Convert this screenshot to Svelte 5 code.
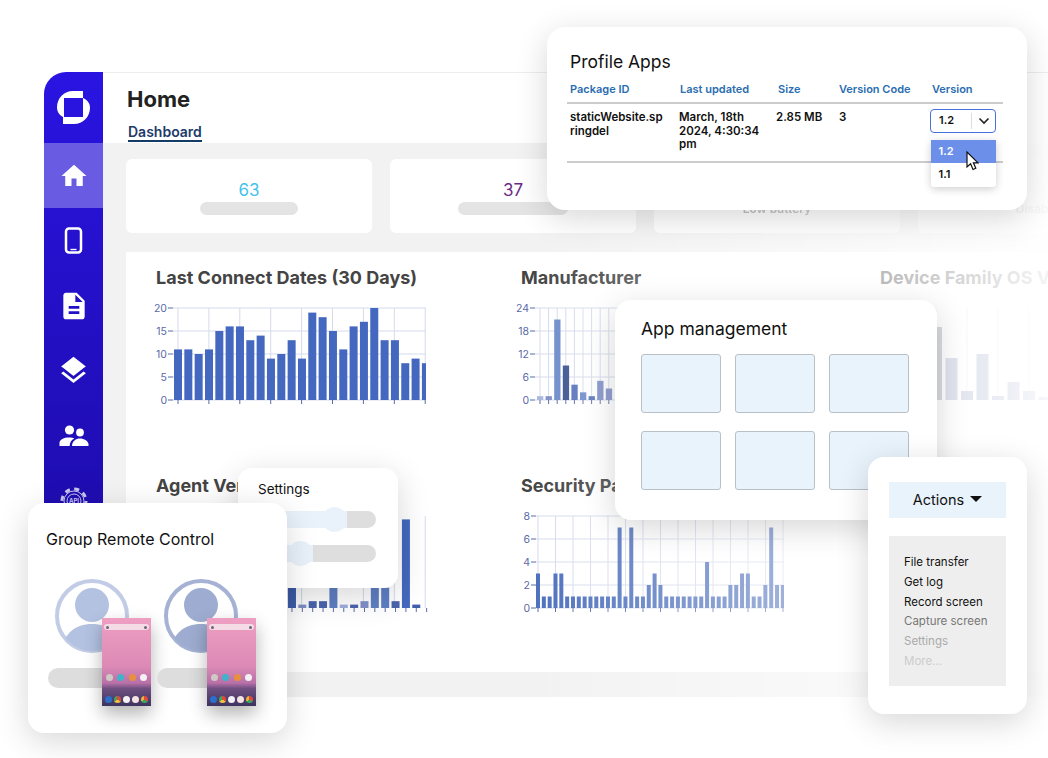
<script>
	const range = (n, a, b) => Array.from({ length: n }, (_, i) => a + b * i);

	const connect = {
		title: 'Last Connect Dates (30 Days)',
		plotX: 17, plotW: 253, max: 20, ticks: [0, 5, 10, 15, 20],
		barX: 1, barW: 8, step: 10.33,
		grid: range(9, 5, 30.9), xTicks: range(9, 5, 30.9),
		values: [11, 11, 10, 11, 15, 16, 16, 13, 14, 9, 10, 13, 9, 19, 18, 15, 11, 16, 17, 20, 13, 13, 8, 9, 8],
		color: '#4468bf'
	};
	const maker = {
		title: 'Manufacturer',
		plotX: 14, plotW: 240, max: 24, ticks: [0, 6, 12, 18, 24],
		barX: 2, barW: 6.3, step: 8.6,
		grid: range(12, 5, 8.6), xTicks: range(12, 5, 8.6),
		values: [1, 1, 21, 9, 4, 2, 1, 5, 3],
		colors: ['#a9b6dc', '#7f8fc8', '#6f8dcb', '#3e5590', '#5875bb', '#6f8dcb', '#5875bb', '#7f8fc8', '#7f8fc8'],
		color: '#6f8dcb'
	};
	const family = {
		title: 'Device Family OS Versions',
		plotX: 14, plotW: 200, max: 92, ticks: [],
		barX: 36, barW: 12, step: 15.5,
		grid: range(8, 42, 31), xTicks: [],
		values: [73, 42, 9, 46, 4, 18, 9, 3],
		colors: ['#68707e'],
		color: '#7d88b8'
	};
	const agent = {
		title: 'Agent Versions',
		plotX: 17, plotW: 253, max: 27, ticks: [],
		barX: 1, barW: 8, step: 10.36,
		grid: range(9, 5, 30.9), xTicks: range(25, 5, 10.36),
		values: [3, 5, 4, 2, 6, 3, 2, 4, 5, 3, 4, 8, 1, 2, 2, 6, 1, 1, 2, 6, 6, 2, 26, 1],
		colors: [...Array(11).fill('#4468bf'), '#3f5fae', '#8090c8', '#4a64ad', '#4a64ad', '#5f7fc4', '#a0aedb', '#4a64ad', '#8090c8', '#5f7fc4', '#5f7fc4', '#4a64ad', '#4468bf', '#3f5fae'],
		color: '#4468bf'
	};
	const security = {
		title: 'Security Patch',
		plotX: 15, plotW: 248, max: 8, ticks: [0, 2, 4, 6, 8],
		barX: 0, barW: 4, step: 5.83,
		grid: range(15, 2, 17.5), xTicks: range(15, 2, 17.5),
		values: [3, 1, 1, 3, 3, 1, 1, 1, 1, 1, 1, 1, 1, 1, 7, 1, 7, 1, 1, 2, 3, 2, 1, 1, 1, 1, 1, 1, 1, 4, 1, 1, 1, 2, 2, 3, 3, 1, 1, 2, 7, 2, 2],
		color: '#4d6fbc'
	};

	const nav = ['home', 'phone', 'doc', 'layers', 'people', 'api'];
	const tiles = [
		{ value: '63', tone: 'cyan' },
		{ value: '37', tone: 'purple' },
		{ label: 'Low battery' },
		{ label: 'Disabled' }
	];
	const actions = ['File transfer', 'Get log', 'Record screen', 'Capture screen', 'Settings', 'More...'];
	const columns = ['Package ID', 'Last updated', 'Size', 'Version Code', 'Version'];
</script>

{#snippet chart(c)}
	{@const top = 8}
	{@const h = 92}
	<div class="chart">
		<h2>{c.title}</h2>
		<svg width="340" height="108" viewBox="0 0 340 108">
			{#each c.ticks as t}
				{@const y = top + h - (t / c.max) * h}
				<line x1={c.plotX} x2={c.plotX + c.plotW} y1={y} y2={y} class="grid" />
				<line x1={c.plotX - 5} x2={c.plotX} y1={y} y2={y} class="tick" />
				<text x={c.plotX - 6} y={y + 4} class="label">{t}</text>
			{/each}
			{#each c.grid as x}
				<line x1={c.plotX + x} x2={c.plotX + x} y1={top} y2={top + h} class="grid" />
			{/each}
			{#each c.xTicks as x}
				<line x1={c.plotX + x} x2={c.plotX + x} y1={top + h} y2={top + h + 4} class="tick" />
			{/each}
			{#each c.values as v, i}
				{@const bar = (v / c.max) * h}
				{@const x = c.plotX + c.barX + i * c.step}
				<rect {x} y={top + h - bar} width={Math.min(c.barW, c.plotX + c.plotW - x)} height={bar} fill={c.colors?.[i] ?? c.color} />
			{/each}
		</svg>
	</div>
{/snippet}

{#snippet icon(name)}
	{#if name === 'home'}
		<svg width="30" height="30" viewBox="0 0 24 24"><path d="M10 20v-6h4v6h5v-8h3L12 3 2 12h3v8z" /></svg>
	{:else if name === 'phone'}
		<svg width="19" height="27" viewBox="0 0 19 27"><rect x="2" y="1.5" width="15" height="24" rx="3" class="outline" /><path d="M6.5 21.8h6v1.4h-6z" /></svg>
	{:else if name === 'doc'}
		<svg width="32" height="32" viewBox="0 0 24 24"><path d="M14 2H6c-1.1 0-2 .9-2 2v16c0 1.1.9 2 2 2h12c1.1 0 2-.9 2-2V8l-6-6zm2 16H8v-2h8v2zm0-4H8v-2h8v2zm-3-5V3.5L18.5 9H13z" /></svg>
	{:else if name === 'layers'}
		<svg width="33" height="33" viewBox="0 0 24 24"><path d="M11.99 18.54l-7.37-5.73L3 14.07l9 7 9-7-1.63-1.27-7.38 5.74zM12 16l7.36-5.73L21 9l-9-7-9 7 1.63 1.27L12 16z" /></svg>
	{:else if name === 'people'}
		<svg width="30" height="22" viewBox="0 0 30 22"><circle cx="10.5" cy="5" r="4.6" /><circle cx="21" cy="7.5" r="3.9" /><path d="M0.5 21v-3c0-3.6 4.6-5.6 9.6-5.6 2 0 3.8.3 5.2 1-3 1.5-4.6 3.7-4.6 7.6z" /><path d="M13 21c0-5 4-7.6 8-7.6s8.500 2.600 8.500 6V21z" /></svg>
	{:else}
		<svg width="30" height="30" viewBox="0 0 30 30" class="gear">
			<circle cx="15" cy="15" r="12" class="teeth" />
			<circle cx="15" cy="15" r="10" class="outline thin" />
			<circle cx="15" cy="15" r="7" class="outline thin" />
			<text x="15" y="17" text-anchor="middle">API</text>
		</svg>
	{/if}
{/snippet}

{#snippet member(tone)}
	<div class="member {tone}">
		<svg class="avatar" width="78" height="78" viewBox="0 0 78 78">
			<clipPath id="round-{tone}"><circle cx="39" cy="39" r="34" /></clipPath>
			<circle cx="39" cy="38" r="35" class="ring" />
			<g clip-path="url(#round-{tone})" class="person">
				<circle cx="39" cy="27" r="17" />
				<path d="M8 80c0-22 12-34 31-34s31 12 31 34z" />
			</g>
		</svg>
		<div class="pill"></div>
		<div class="handset">
			<div class="search"><i></i><i></i></div>
			<div class="apps">
				<i class="a1"></i><i class="a2"></i><i class="a3"></i><i class="a4"></i>
			</div>
			<div class="dock">
				<i class="d1"></i><i class="d2"></i><i class="d3"></i><i class="d4"></i><i class="d5"></i>
			</div>
		</div>
	</div>
{/snippet}

<div class="stage">
	<aside class="sidebar">
		<div class="logo">
			<svg width="33" height="33" viewBox="0 0 33 33">
				<path fill-rule="evenodd" d="M26 0v7c4.500 2 7 5.500 7 9.500C33 26 26 33 17 33H6v-7c-4-2-6-5.500-6-9.500C0 7 7 0 16 0zM7 7v19h19V7z" />
			</svg>
		</div>
		{#each nav as name, i}
			<div class="nav-item" class:active={i === 0}>
				{@render icon(name)}
			</div>
		{/each}
	</aside>

	<main class="main">
		<header class="top">
			<h1>Home</h1>
			<span class="tab">Dashboard</span>
		</header>
		<div class="content">
			<div class="tiles">
				{#each tiles as tile}
					<div class="tile">
						{#if tile.value}
							<span class="value {tile.tone}">{tile.value}</span>
							<span class="tile-pill"></span>
						{:else}
							<span class="tile-label">{tile.label}</span>
						{/if}
					</div>
				{/each}
			</div>
			<section class="panel">
				{@render chart(connect)}
				{@render chart(maker)}
				{@render chart(family)}
				{@render chart(agent)}
				{@render chart(security)}
			</section>
		</div>
		<div class="fade"></div>
	</main>

	<div class="card profile">
		<h3>Profile Apps</h3>
		<div class="table head">
			{#each columns as col}
				<span>{col}</span>
			{/each}
		</div>
		<div class="table body">
			<span class="package">staticWebsite.springdel</span>
			<span class="updated">March, 18th 2024, 4:30:34 pm</span>
			<span>2.85 MB</span>
			<span>3</span>
			<div class="select">
				<span class="current">1.2</span>
				<span class="chevron">
					<svg width="12" height="8" viewBox="0 0 12 8"><path d="M1.500 1.500 6 6l4.500-4.500" /></svg>
				</span>
				<ul class="options">
					<li class="on">1.2</li>
					<li>1.1</li>
				</ul>
				<svg class="cursor" width="13" height="20" viewBox="0 0 13 20"><path d="M1 1v15l3.600-3.200L7 18.500l2.800-1.200-2.400-5.500H12z" /></svg>
			</div>
		</div>
	</div>

	<div class="card apps-card">
		<h3>App management</h3>
		<div class="app-grid">
			{#each Array(6) as _}
				<div class="app-tile"></div>
			{/each}
		</div>
	</div>

	<div class="card actions">
		<div class="actions-btn">Actions <span class="caret"></span></div>
		<ul class="actions-menu">
			{#each actions as item, i}
				<li class="step{i}">{item}</li>
			{/each}
		</ul>
	</div>

	<div class="card settings">
		<h4>Settings</h4>
		<div class="slider"><span class="fill long"></span></div>
		<div class="slider"><span class="fill short"></span></div>
	</div>

	<div class="card remote">
		<h3>Group Remote Control</h3>
		<div class="members">
			{@render member('light')}
			{@render member('dark')}
		</div>
	</div>
</div>

<style>
	:global(body) {
		margin: 0;
		background: #fff;
	}

	.stage {
		position: relative;
		display: flex;
		box-sizing: border-box;
		width: 1048px;
		height: 758px;
		padding: 72px 0 61px 44px;
		overflow: hidden;
		background: #fff;
		font-family: Inter, 'Liberation Sans', sans-serif;
		color: #111;
	}

	/* sidebar */
	.sidebar {
		flex: 0 0 59px;
		border-top-left-radius: 22px;
		background: linear-gradient(180deg, #2a14e2 0%, #2410c8 35%, #1a0a9c 100%);
		fill: #fff;
	}

	.logo {
		display: flex;
		align-items: center;
		justify-content: center;
		height: 71px;
	}

	.nav-item {
		display: flex;
		align-items: center;
		justify-content: center;
		height: 65px;
	}

	.nav-item.active {
		background: #6a5ce2;
	}

	.outline {
		fill: none;
		stroke: #fff;
		stroke-width: 2.5;
	}

	.outline.thin {
		stroke-width: 1;
		stroke: #c9c6ee;
	}

	.gear .teeth {
		fill: none;
		stroke: #c9c6ee;
		stroke-width: 3;
		stroke-dasharray: 5 4.400;
	}

	.gear text {
		fill: #c9c6ee;
		font-size: 6px;
		font-weight: 700;
	}

	/* dashboard */
	.main {
		position: relative;
		flex: 1;
		display: flex;
		flex-direction: column;
		min-width: 0;
		overflow: hidden;
		border-top: 1px solid #eee;
	}

	.top {
		box-sizing: border-box;
		height: 70px;
		padding: 13px 0 0 24px;
	}

	.top h1 {
		margin: 0;
		font-size: 22px;
		line-height: 26px;
		font-weight: 700;
		color: #222;
	}

	.tab {
		display: inline-block;
		margin: 12px 0 0 1px;
		border-bottom: 2px solid #143a66;
		font-size: 14px;
		line-height: 16px;
		font-weight: 600;
		color: #1d3a6a;
	}

	.content {
		flex: 1;
		padding: 16px 0 25px 23px;
		background: #f2f2f2;
	}

	.tiles {
		display: grid;
		grid-template-columns: repeat(4, 246px);
		gap: 18px;
	}

	.tile {
		display: flex;
		flex-direction: column;
		align-items: center;
		box-sizing: border-box;
		height: 74px;
		padding-top: 20px;
		border-radius: 6px;
		background: #fff;
	}

	.value {
		font-size: 17px;
		line-height: 22px;
	}

	.cyan {
		color: #45c2ea;
	}

	.purple {
		color: #6d2a86;
	}

	.tile-pill {
		width: 98px;
		height: 13px;
		margin-top: 1px;
		border-radius: 7px;
		background: #e4e4e4;
	}

	.tile:nth-child(2) .tile-pill {
		width: 110px;
	}

	.tile-label {
		margin-top: 22px;
		font-size: 12px;
		font-weight: 600;
		color: #999;
		filter: blur(0.6px);
	}

	.panel {
		display: grid;
		grid-template-columns: 365px 359px 340px;
		grid-auto-rows: 142px;
		row-gap: 66px;
		height: 420px;
		box-sizing: border-box;
		margin-top: 19px;
		padding: 14px 0 0 30px;
		background: #fff;
	}

	.chart h2 {
		margin: 0 0 10px;
		font-size: 18px;
		line-height: 24px;
		font-weight: 700;
		color: #444;
		white-space: nowrap;
	}

	.chart svg {
		display: block;
		overflow: visible;
	}

	.grid {
		stroke: #d6dbec;
		stroke-width: 1;
	}

	.tick {
		stroke: #5a6aa8;
		stroke-width: 1;
	}

	.label {
		fill: #5a6aa8;
		font-size: 10.500px;
		text-anchor: end;
	}

	.fade {
		position: absolute;
		inset: 0;
		background: linear-gradient(90deg, rgba(255, 255, 255, 0) 45%, rgba(255, 255, 255, 0.94) 100%);
		pointer-events: none;
	}

	/* floating cards */
	.card {
		position: absolute;
		box-sizing: border-box;
		background: #fff;
		border-radius: 16px;
		box-shadow: 0 8px 32px rgba(0, 0, 0, 0.16);
	}

	.card h3 {
		margin: 0;
		font-size: 17.500px;
		line-height: 24px;
		font-weight: 400;
	}

	.profile {
		left: 547px;
		top: 27px;
		width: 480px;
		height: 183px;
		padding: 23px 24px 0 23px;
		border-radius: 18px;
	}

	.table {
		display: grid;
		margin: 0 0 0 -3px;
		padding-left: 3px;
	}

	.head {
		grid-template-columns: 110px 98px 61px 93px 71px;
		align-items: center;
		height: 25px;
		padding-top: 3px;
		border-bottom: 2px solid #ccc;
		font-size: 11px;
		line-height: 13.500px;
		font-weight: 600;
		color: #2a6db0;
		white-space: nowrap;
	}

	.body {
		grid-template-columns: 109px 97px 63px 91px 71px;
		height: 50px;
		padding-top: 7px;
		border-bottom: 2px solid #ccc;
		font-size: 11.500px;
		line-height: 13.500px;
		font-weight: 600;
	}

	.package {
		width: 96px;
		word-break: break-all;
	}

	.updated {
		width: 84px;
	}

	.select {
		position: relative;
		display: flex;
		align-items: center;
		box-sizing: border-box;
		width: 66px;
		height: 24px;
		margin-top: -2px;
		border: 1.500px solid #4a72dc;
		border-radius: 4px;
		font-size: 11px;
	}

	.current {
		flex: 1;
		padding-left: 8px;
	}

	.chevron {
		display: flex;
		align-items: center;
		justify-content: center;
		width: 23px;
		height: 16px;
		border-left: 1px solid #ddd;
	}

	.chevron path {
		fill: none;
		stroke: #222;
		stroke-width: 1.600;
	}

	.options {
		position: absolute;
		left: -0.500px;
		top: 29.500px;
		width: 65px;
		margin: 0;
		padding: 0;
		list-style: none;
		border-radius: 0 0 3px 3px;
		background: #fff;
		box-shadow: 0 2px 8px rgba(0, 0, 0, 0.2);
	}

	.options li {
		height: 23.500px;
		padding-left: 8px;
		line-height: 23.500px;
	}

	.options .on {
		background: #6c90ea;
		color: #fff;
	}

	.cursor {
		position: absolute;
		left: 35px;
		top: 41px;
	}

	.cursor path {
		fill: #fff;
		stroke: #111;
		stroke-width: 1.200;
	}

	.apps-card {
		left: 615px;
		top: 300px;
		width: 322px;
		height: 220px;
		padding: 17px 0 0 26px;
	}

	.app-grid {
		display: grid;
		grid-template-columns: repeat(3, 80px);
		grid-auto-rows: 59px;
		column-gap: 14px;
		row-gap: 18px;
		margin-top: 13px;
	}

	.app-tile {
		border: 1px solid #b9c0c6;
		border-radius: 3px;
		background: #e9f3fc;
	}

	.actions {
		left: 868px;
		top: 457px;
		width: 159px;
		height: 257px;
		padding: 25px 21px 0;
	}

	.actions-btn {
		display: flex;
		align-items: center;
		justify-content: center;
		gap: 6px;
		height: 36px;
		padding-bottom: 2px;
		box-sizing: border-box;
		background: #e9f3fc;
		font-size: 14.500px;
	}

	.caret {
		border: 6px solid transparent;
		border-top: 6px solid #111;
		border-bottom: 0;
	}

	.actions-menu {
		box-sizing: border-box;
		height: 150px;
		margin: 18px 0 0;
		padding: 17px 0 0 15px;
		list-style: none;
		background: #eee;
		font-size: 11.500px;
		line-height: 19.800px;
	}

	.step3 {
		color: #777;
	}

	.step4 {
		color: #aaa;
	}

	.step5 {
		color: #ccc;
	}

	.settings {
		left: 238px;
		top: 468px;
		width: 160px;
		height: 120px;
		padding: 11px 22px 0 20px;
		border-radius: 14px;
	}

	.settings h4 {
		margin: 0 0 12px;
		font-size: 13.500px;
		line-height: 20px;
		font-weight: 400;
	}

	.slider {
		position: relative;
		height: 17px;
		margin-bottom: 17px;
		border-radius: 9px;
		background: #dedede;
	}

	.fill {
		position: absolute;
		left: 0;
		top: 0;
		height: 17px;
		border-radius: 9px 0 0 9px;
		background: #e9f2fb;
	}

	.fill::after {
		content: '';
		position: absolute;
		right: 0;
		top: -4px;
		width: 25px;
		height: 25px;
		border-radius: 50%;
		background: #e9f2fb;
	}

	.fill.long {
		width: 89px;
	}

	.fill.short {
		width: 55px;
	}

	.remote {
		left: 28px;
		top: 503px;
		width: 259px;
		height: 230px;
		padding: 24px 0 0 18px;
	}

	.remote h3 {
		font-size: 16px;
	}

	.members {
		display: flex;
		gap: 31px;
		margin: 27px 0 0 7px;
	}

	.member {
		position: relative;
		width: 78px;
	}

	.avatar {
		display: block;
	}

	.ring {
		fill: #fff;
		stroke-width: 4;
	}

	.light .ring {
		stroke: #c2cce6;
	}

	.light .person {
		fill: #b4c2e2;
	}

	.dark .ring {
		stroke: #a5b2d4;
	}

	.dark .person {
		fill: #9dacd0;
	}

	.pill {
		width: 78px;
		height: 20px;
		margin: 12px 0 0 -5px;
		border-radius: 10px;
		background: #ddd;
	}

	.handset {
		position: absolute;
		left: 49px;
		top: 40px;
		display: flex;
		flex-direction: column;
		box-sizing: border-box;
		width: 49px;
		height: 88px;
		padding: 6px 2px 3px;
		background: linear-gradient(180deg, #ee9fc2 0%, #dc8ab5 55%, #b870a8 74%, #6f5080 80%, #3d3360 100%);
		box-shadow: 0 8px 18px rgba(0, 0, 0, 0.3);
	}

	.dark .handset {
		left: 45px;
	}

	.handset i {
		display: block;
		border-radius: 50%;
	}

	.search {
		display: flex;
		align-items: center;
		justify-content: space-between;
		height: 6px;
		padding: 0 2px;
		border-radius: 3px;
		background: #f4dbe6;
	}

	.search i {
		width: 3px;
		height: 3px;
		background: #667;
	}

	.apps,
	.dock {
		display: flex;
		justify-content: space-around;
	}

	.apps {
		margin-top: 44px;
	}

	.apps i {
		width: 7px;
		height: 7px;
	}

	.dock {
		margin-top: auto;
	}

	.dock i {
		width: 7px;
		height: 7px;
		background: #f3f1f5;
	}

	.a1 {
		background: #cfc9c6;
	}

	.a2 {
		background: #3fb3c9;
	}

	.a3 {
		background: #e8913c;
	}

	.a4 {
		background: #f3f1f5;
	}

	.dock .d1 {
		background: #2a6fc9;
	}

	.dock .d2 {
		background: conic-gradient(#e04a3c 0 33%, #f3c23c 33% 66%, #3aa85a 66%);
	}

	.dock .d4 {
		background: #f4e4e4;
	}

	.dock .d5 {
		background: conic-gradient(#e04a3c 0 33%, #3aa85a 33% 66%, #e8b53c 66%);
	}
</style>
